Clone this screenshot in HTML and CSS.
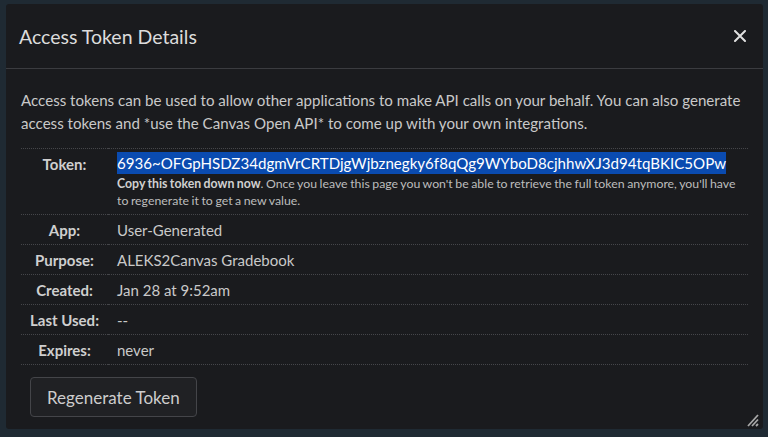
FILE: index.html
```html
<!DOCTYPE html>
<html>
<head>
	<meta charset="utf-8">
	<title>Access Token Details</title>
	<link rel="stylesheet" href="styles.css">
</head>
<body>
	<div class="dialog">
		<div class="dialog-header">
			<h2>Access Token Details</h2>
			<button type="button" class="close-button" aria-label="Close">
				<svg width="12" height="12" viewBox="0 0 12 12"><path d="M1 1L11 11M11 1L1 11" stroke="#e0e0e0" stroke-width="2" stroke-linecap="round"/></svg>
			</button>
		</div>

		<div class="dialog-body">
			<p class="intro">Access tokens can be used to allow other applications to make API calls on your behalf. You can also generate access tokens and *use the Canvas Open API* to come up with your own integrations.</p>

			<table class="token-table">
				<tr class="token-row">
					<th>Token:</th>
					<td>
						<span class="token-value">6936~OFGpHSDZ34dgmVrCRTDjgWjbznegky6f8qQg9WYboD8cjhhwXJ3d94tqBKIC5OPw</span>
						<div class="token-note"><b>Copy this token down now</b>. Once you leave this page you won't be able to retrieve the full token anymore, you'll have to regenerate it to get a new value.</div>
					</td>
				</tr>
				<tr>
					<th>App:</th>
					<td>User-Generated</td>
				</tr>
				<tr>
					<th>Purpose:</th>
					<td>ALEKS2Canvas Gradebook</td>
				</tr>
				<tr>
					<th>Created:</th>
					<td>Jan 28 at 9:52am</td>
				</tr>
				<tr>
					<th>Last Used:</th>
					<td>--</td>
				</tr>
				<tr>
					<th>Expires:</th>
					<td>never</td>
				</tr>
			</table>

			<button type="button" class="regen-button">Regenerate Token</button>
		</div>

		<!-- resize grip -->
		<svg class="grip" width="12" height="13" viewBox="0 0 12 13"><path d="M1 12L11 1M5 12L11 5.5M9 12L11 10" stroke="#a8a8a8" stroke-width="1.8"/></svg>
	</div>
</body>
</html>
```

FILE: styles.css
```css
body {
	margin: 0;
	padding: 0;
	background-color: #1f2a33;
	font-family: Lato, "Open Sans", sans-serif;
	color: #c9c9c9;
}

.dialog {
	position: relative;
	box-sizing: border-box;
	width: 757px;
	height: 425px;
	margin: 4px 0 0 6px;
	background-color: #1a1b1e;
	border-radius: 3px;
}

.dialog-header {
	display: flex;
	align-items: center;
	justify-content: space-between;
	height: 64px;
	padding: 0 16px 0 13px;
	border-bottom: 1px solid #3b3c40;
}

.dialog-header h2 {
	margin: 0;
	font-size: 19.5px;
	font-weight: normal;
	color: #dcdcdc;
}

.close-button {
	background: none;
	border: none;
	padding: 0;
	width: 14px;
	height: 14px;
	display: flex;
	align-items: center;
	justify-content: center;
	cursor: pointer;
}

.dialog-body {
	padding: 0 15px;
}

.intro {
	margin: 20px 0 13px;
	font-size: 15.1px;
	line-height: 23px;
}

.token-table {
	width: 100%;
	border-collapse: collapse;
	font-size: 15px;
	border-top: 1px dotted #45464a;
}

.token-table tr {
	border-bottom: 1px dotted #45464a;
}

.token-table th {
	width: 87px;
	padding: 0;
	text-align: center;
	font-weight: bold;
	height: 29px;
	white-space: nowrap;
	color: #cfcfcf;
}

.token-table td {
	padding: 0 0 0 9px;
	height: 29px;
}

.token-row th {
	vertical-align: top;
	padding-top: 4px;
	line-height: 22px;
}

.token-row td {
	padding-top: 3px;
	padding-bottom: 5px;
}

.token-value {
	display: inline-block;
	background-color: #0a4bb0;
	color: #ffffff;
	font-size: 15.1px;
	line-height: 22px;
}

.token-note {
	font-size: 12.3px;
	line-height: 17px;
	margin-top: 1px;
	word-spacing: -0.6px;
	color: #bdbdbd;
}

.token-note b {
	color: #d0d0d0;
}

.regen-button {
	margin: 12px 0 0 9px;
	height: 40px;
	padding: 0 16px;
	font-family: Lato, "Open Sans", sans-serif;
	font-size: 17px;
	color: #cdcdcd;
	background-color: #202124;
	border: 1px solid #444549;
	border-radius: 4px;
	cursor: pointer;
}

.grip {
	position: absolute;
	right: 4px;
	bottom: 2px;
}
```
